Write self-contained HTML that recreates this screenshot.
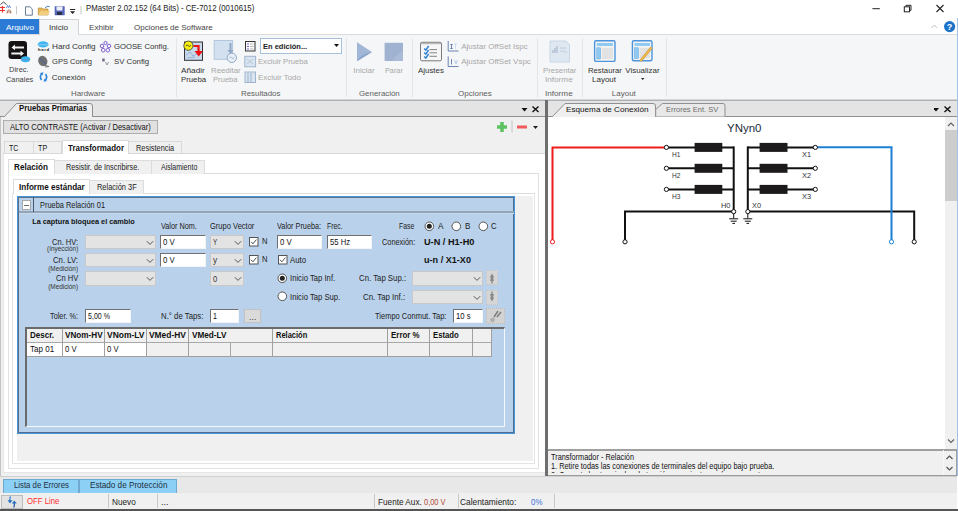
<!DOCTYPE html>
<html><head><meta charset="utf-8"><style>
html,body{margin:0;padding:0;width:958px;height:511px;overflow:hidden;background:#fff;}
body{position:relative;font-family:"Liberation Sans",sans-serif;}
body>div,body>svg{position:absolute;box-sizing:border-box;}
.t{white-space:pre;}

</style></head><body>
<div style="left:0px;top:0px;width:958px;height:19px;background:#ffffff;"></div>
<div style="left:0px;top:19px;width:958px;height:16px;background:#ffffff;"></div>
<div style="left:0px;top:19px;width:39px;height:16px;background:#2b7bd6;"></div>
<div class="t" style="left:5.6px;top:23.86px;font-size:8.00px;line-height:8.00px;font-weight:400;color:#ffffff;transform:scaleX(1.032);transform-origin:0 0;">Arquivo</div>
<div style="left:39px;top:19px;width:40px;height:17px;background:#f5f6f7;border:1px solid #d4d4d4;border-bottom:none;"></div>
<div class="t" style="left:49.1px;top:23.86px;font-size:8.00px;line-height:8.00px;font-weight:400;color:#333;transform:scaleX(1.028);transform-origin:0 0;">Inicio</div>
<div class="t" style="left:89.2px;top:23.66px;font-size:8.00px;line-height:8.00px;font-weight:400;color:#444;transform:scaleX(1.010);transform-origin:0 0;">Exhibir</div>
<div class="t" style="left:134.1px;top:23.66px;font-size:8.00px;line-height:8.00px;font-weight:400;color:#444;">Opciones de Software</div>
<div style="left:0px;top:34px;width:39px;height:1px;background:#dadbdc;"></div>
<div style="left:79px;top:34px;width:879px;height:1px;background:#dadbdc;"></div>
<div style="left:0px;top:35px;width:958px;height:65px;background:#f5f6f7;"></div>
<div style="left:0px;top:99px;width:958px;height:1px;background:#d5d6d7;"></div>
<div style="left:176px;top:38px;width:1px;height:59px;background:#e4e5e6;"></div>
<div style="left:346px;top:38px;width:1px;height:59px;background:#e4e5e6;"></div>
<div style="left:412px;top:38px;width:1px;height:59px;background:#e4e5e6;"></div>
<div style="left:537px;top:38px;width:1px;height:59px;background:#e4e5e6;"></div>
<div style="left:582px;top:38px;width:1px;height:59px;background:#e4e5e6;"></div>
<div style="left:666px;top:38px;width:1px;height:59px;background:#e4e5e6;"></div>
<div class="t" style="left:70.5px;top:90.06px;font-size:8.00px;line-height:8.00px;font-weight:400;color:#5e5e5e;transform:scaleX(0.986);transform-origin:0 0;">Hardware</div>
<div class="t" style="left:240.7px;top:90.06px;font-size:8.00px;line-height:8.00px;font-weight:400;color:#5e5e5e;transform:scaleX(0.984);transform-origin:0 0;">Resultados</div>
<div class="t" style="left:358.5px;top:90.06px;font-size:8.00px;line-height:8.00px;font-weight:400;color:#5e5e5e;transform:scaleX(0.984);transform-origin:0 0;">Generación</div>
<div class="t" style="left:458.0px;top:90.06px;font-size:8.00px;line-height:8.00px;font-weight:400;color:#5e5e5e;">Opciones</div>
<div class="t" style="left:545.4px;top:90.06px;font-size:8.00px;line-height:8.00px;font-weight:400;color:#5e5e5e;transform:scaleX(1.021);transform-origin:0 0;">Informe</div>
<div class="t" style="left:611.8px;top:90.06px;font-size:8.00px;line-height:8.00px;font-weight:400;color:#5e5e5e;">Layout</div>
<div class="t" style="left:86.1px;top:3.66px;font-size:8.70px;line-height:8.70px;font-weight:400;color:#1a1a1a;transform:scaleX(0.898);transform-origin:0 0;">PMaster 2.02.152 (64 Bits) - CE-7012 (0010615)</div>
<svg style="left:0;top:0" width="90" height="19"><path d="M0.5,4.5 L3.5,2 L6.5,4.5" fill="none" stroke="#333" stroke-width="0.9"/><path d="M0,7.5 L5,7.5 M0,10.5 L5,10.5 M2.5,6 L2.5,12.5" stroke="#e83030" stroke-width="1.2"/><path d="M6.5,8 L7.5,5.5 L8.5,7.5 L9.5,5.5 L10.5,8" fill="none" stroke="#5a7ee0" stroke-width="0.9"/><path d="M7.2,13.5 L7.2,11 Q9,8.6 10.8,11 L10.8,13.5 M7.2,12 L10.8,12" fill="none" stroke="#b0705a" stroke-width="1"/><rect x="16" y="6" width="1" height="8.5" fill="#c8c8c8"/><path d="M25.5,6.8 L30,6.8 L32.3,9 L32.3,15.2 L25.5,15.2 Z" fill="#fdfdfd" stroke="#5b6f8c" stroke-width="0.9"/><path d="M38.3,8 L42,8 L43,9 L48,9 L48,15 L38.3,15 Z" fill="#e7b95a" stroke="#b88a3a" stroke-width="0.7"/><path d="M38.5,15 L40.5,11 L50,11 L48,15 Z" fill="#f1cf7f"/><path d="M45,8 Q47,5.5 49.5,6.5" fill="none" stroke="#3b80d0" stroke-width="1"/><rect x="54.7" y="6.3" width="10" height="9" fill="#5265b8" rx="0.5"/><rect x="56.5" y="6.5" width="6" height="4" fill="#f0f0f8"/><rect x="57" y="12" width="5" height="3" fill="#2a3048"/><rect x="70" y="9" width="5.2" height="1" fill="#222"/><path d="M70,11.2 L75.2,11.2 L72.6,14 Z" fill="#222"/><rect x="80.5" y="6" width="1" height="8.5" fill="#c8c8c8"/></svg>
<svg style="left:860px;top:0" width="98" height="36"><rect x="12.4" y="8.2" width="7.4" height="1" fill="#222"/><rect x="44.3" y="6.8" width="5.2" height="5" fill="none" stroke="#222" stroke-width="1"/><path d="M46,6.5 L46,5.3 L51,5.3 L51,10.3 L49.8,10.3" fill="none" stroke="#222" stroke-width="1"/><path d="M76.5,5 L83.5,12 M83.5,5 L76.5,12" stroke="#222" stroke-width="1.1"/><path d="M71.5,28 L74.3,25 L77.1,28" fill="none" stroke="#c4c4c4" stroke-width="1"/><circle cx="89.6" cy="26.6" r="5.6" fill="#1b73c9"/><text x="89.6" y="30" font-family="Liberation Sans" font-weight="700" font-size="9" fill="#fff" text-anchor="middle">?</text></svg>
<svg style="left:0;top:35px" width="680" height="64"><rect x="8.5" y="6" width="18.5" height="18" rx="3.2" fill="#151313"/><path d="M11.5,12.4 L15,9.6 L15,11.4 L24,11.4 L24,13.4 L15,13.4 L15,15.2 Z" fill="#f4f4f4"/><path d="M24,18.5 L20.5,15.7 L20.5,17.5 L11.3,17.5 L11.3,19.5 L20.5,19.5 L20.5,21.3 Z" fill="#f4f4f4"/><ellipse cx="25.5" cy="24.3" rx="4.6" ry="3" fill="#35b3ef"/><rect x="21" y="24.3" width="9" height="1" fill="#6a9bd0"/><ellipse cx="43.1" cy="9.4" rx="5.4" ry="3.1" fill="#3cb7f0"/><rect x="38" y="9.2" width="10.5" height="1" fill="#8fc8ee"/><text x="38" y="16" font-family="Liberation Sans" font-weight="700" font-size="4.2" fill="#111" textLength="11">hard</text><ellipse cx="42.8" cy="26" rx="4.5" ry="5.3" fill="#707070" transform="rotate(-25 42.8 26)"/><path d="M40,24 L46,29" stroke="#3060b0" stroke-width="0.8"/><path d="M44,30 L49,31.5 L45,32" fill="none" stroke="#666" stroke-width="0.9"/><path d="M42,38.5 Q39,41 41.5,45" fill="none" stroke="#2b86d9" stroke-width="1.6"/><path d="M40,38 L43.5,37.3 L42.5,40.5 Z" fill="#2b86d9"/><path d="M45,45.5 Q48,43 45.5,39" fill="none" stroke="#2b86d9" stroke-width="1.6"/><path d="M47,46 L43.5,46.7 L44.5,43.5 Z" fill="#2b86d9"/><g fill="none" stroke="#7e5fcf" stroke-width="1"><circle cx="105.5" cy="8" r="1.6"/><circle cx="102" cy="11" r="1.8"/><circle cx="109" cy="11" r="1.8"/><circle cx="103.2" cy="15.2" r="1.8"/><circle cx="107.8" cy="15.2" r="1.8"/></g><rect x="102.2" y="23.5" width="2.5" height="3" fill="#7a6a8a"/><path d="M105.5,27 L107,30 L108.5,27" fill="none" stroke="#8a8a9a" stroke-width="0.9"/><rect x="184.5" y="7" width="18" height="18.3" fill="#c9d9ec" stroke="#333" stroke-width="1"/><path d="M186,20 L190,17 L193,21 L198,18 M187,23 L195,22" stroke="#9ab3d4" stroke-width="1" fill="none"/><path d="M193.5,11 L198.5,11 L198.5,17" fill="none" stroke="#ee1111" stroke-width="2.2"/><path d="M194.5,16 L203,16 L198.7,21.5 Z" fill="#ee1111"/><circle cx="188.4" cy="10.7" r="4.6" fill="#f5ee10" stroke="#333" stroke-width="0.8"/><path d="M185.9,11 Q187.1,9 188.3,10.7 Q189.5,12.5 190.9,10.3" fill="none" stroke="#222" stroke-width="0.8"/><rect x="214.2" y="5.5" width="18.4" height="18.8" fill="#d3e0ef" stroke="#b1c6dd" stroke-width="1"/><path d="M230.5,8 L230.5,16" stroke="#8ea7c4" stroke-width="2"/><path d="M227.5,15 L233.5,15 L230.5,19 Z" fill="#8ea7c4"/><circle cx="231.8" cy="22.8" r="4.7" fill="#e6eef7" stroke="#93a9c3" stroke-width="1"/><path d="M229.3,23 Q230.5,21 231.7,22.8 Q232.9,24.6 234.3,22.4" fill="none" stroke="#93a9c3" stroke-width="0.8"/><rect x="245.5" y="6.5" width="9.5" height="9.5" fill="#fafafa" stroke="#333" stroke-width="1"/><path d="M247,9 L249,9 M247,11.5 L249,11.5 M247,14 L249,14" stroke="#7a5fe0" stroke-width="1"/><path d="M250,9 L253.5,9 M250,11.5 L253.5,11.5 M250,14 L253.5,14" stroke="#aaa" stroke-width="0.8"/><rect x="244.8" y="21.3" width="10.8" height="10.5" fill="#d9e4f0" stroke="#9fb5cf" stroke-width="1"/><path d="M247,24 L253,29 M247,29 L253,24" stroke="#b5c7dc" stroke-width="1"/><rect x="245" y="37" width="10.5" height="10.5" fill="#d9e4f0" stroke="#9fb5cf" stroke-width="1"/><path d="M248,38 L248,47 M251,38 L251,47" stroke="#9fb5cf" stroke-width="1"/><path d="M357,7.2 L372,17 L357,26.2 Z" fill="#a2b7d6"/><path d="M357,26.2 Q362,18 372,17 L357,26.2" fill="#8ba5cc"/><rect x="384.6" y="7.8" width="18.4" height="18.2" fill="#9fb2d0"/><path d="M392,26 Q398,18 403,16 L403,26 Z" fill="#aabbd5"/><rect x="420.5" y="7.3" width="21" height="18.5" rx="1.5" fill="#f6f6f6" stroke="#7a7a7a" stroke-width="1"/><rect x="421" y="7.8" width="20" height="1.4" fill="#b8b8b8"/><path d="M424.2,13.6 L425.8,15.2 L428.6,11 M424.2,17.6 L425.8,19.2 L428.6,15 M424.2,21.6 L425.8,23.2 L428.6,19" fill="none" stroke="#2a7fd4" stroke-width="1.4"/><path d="M429.5,14.6 L437,14.6 M429.5,17.8 L437,17.8 M429.5,21.3 L437,21.3" stroke="#777" stroke-width="0.9"/><g stroke="#5a78a8" stroke-width="0.9" fill="none"><path d="M448.2,6 L448.2,16 L458.5,16 M451.5,9 L451.5,14 M450.3,9.5 L452.7,9.5 M450.3,13.5 L452.7,13.5"/><path d="M448.2,21.3 L448.2,31.5 L458.5,31.5 M451.5,24 L451.5,29.5"/></g><path d="M454,9 L457,9 M455.5,9 L455.5,14" stroke="#c2d4ea" stroke-width="0.8"/><path d="M454.5,25 L456,29 L457.5,25" fill="none" stroke="#a8c2e4" stroke-width="0.8"/><path d="M550,6 L566,6 L569.5,9.5 L569.5,27 L550,27 Z" fill="#dfe7f1" stroke="#c8d6e6" stroke-width="1"/><path d="M553,18 L553,15 M555,18 L555,13 M557,18 L557,11" stroke="#a9b9cc" stroke-width="1.2"/><path d="M560,13 L566,13 M560,16 L564,16 L567,18" stroke="#b8c8da" stroke-width="0.9" fill="none"/><rect x="594.6" y="5.8" width="20.4" height="20.6" rx="1.5" fill="#f3f3f3" stroke="#4c95dc" stroke-width="1.4"/><rect x="596.8" y="8" width="16" height="3" fill="#8fcaf3"/><rect x="596.8" y="12.8" width="3.8" height="11.2" fill="#8fcaf3" stroke="#5aa0dd" stroke-width="0.5"/><rect x="602" y="12.8" width="11" height="11.2" fill="#e2e2e2"/><rect x="632.4" y="5.8" width="19.6" height="20" rx="1.5" fill="#f3f3f3" stroke="#4c95dc" stroke-width="1.4"/><rect x="634.6" y="8" width="15.4" height="3" fill="#8fcaf3"/><rect x="634.6" y="12.8" width="3.8" height="10.5" fill="#8fcaf3" stroke="#5aa0dd" stroke-width="0.5"/><rect x="639.8" y="12.8" width="10.2" height="10.5" fill="#e2e2e2"/><path d="M640.5,26 L651.5,12.5" stroke="#c98a2c" stroke-width="2.6"/><path d="M640.5,26 L651.5,12.5" stroke="#f2c250" stroke-width="1.4"/><path d="M641,43 L644.4,43 L642.7,45 Z" fill="#222"/></svg>
<div style="left:260px;top:38px;width:82px;height:16px;background:#ffffff;border:1px solid #a7c1dc;"></div>
<div class="t" style="left:262.6px;top:42.66px;font-size:8.00px;line-height:8.00px;font-weight:700;color:#222;transform:scaleX(0.938);transform-origin:0 0;">En edición...</div>
<svg style="left:334px;top:44px" width="6" height="4"><path d="M0,0 L5,0 L2.5,3 Z" fill="#111"/></svg>
<div class="t" style="left:9.2px;top:66.46px;font-size:8.00px;line-height:8.00px;font-weight:400;color:#444;transform:scaleX(0.943);transform-origin:0 0;">Direc.</div>
<div class="t" style="left:5.9px;top:75.56px;font-size:8.00px;line-height:8.00px;font-weight:400;color:#444;transform:scaleX(0.927);transform-origin:0 0;">Canales</div>
<div class="t" style="left:51.7px;top:42.56px;font-size:8.00px;line-height:8.00px;font-weight:400;color:#333;transform:scaleX(1.021);transform-origin:0 0;">Hard Config</div>
<div class="t" style="left:51.7px;top:58.36px;font-size:8.00px;line-height:8.00px;font-weight:400;color:#333;transform:scaleX(0.947);transform-origin:0 0;">GPS Config</div>
<div class="t" style="left:51.7px;top:73.56px;font-size:8.00px;line-height:8.00px;font-weight:400;color:#333;">Conexión</div>
<div class="t" style="left:114.0px;top:42.56px;font-size:8.00px;line-height:8.00px;font-weight:400;color:#333;transform:scaleX(0.963);transform-origin:0 0;">GOOSE Config.</div>
<div class="t" style="left:114.0px;top:58.36px;font-size:8.00px;line-height:8.00px;font-weight:400;color:#333;transform:scaleX(0.977);transform-origin:0 0;">SV Config</div>
<div class="t" style="left:181.3px;top:66.96px;font-size:8.00px;line-height:8.00px;font-weight:400;color:#333;transform:scaleX(1.029);transform-origin:0 0;">Añadir</div>
<div class="t" style="left:180.8px;top:75.96px;font-size:8.00px;line-height:8.00px;font-weight:400;color:#333;transform:scaleX(0.973);transform-origin:0 0;">Prueba</div>
<div class="t" style="left:210.6px;top:66.76px;font-size:8.00px;line-height:8.00px;font-weight:400;color:#a8a8a8;transform:scaleX(0.979);transform-origin:0 0;">Reeditar</div>
<div class="t" style="left:212.6px;top:75.76px;font-size:8.00px;line-height:8.00px;font-weight:400;color:#a8a8a8;transform:scaleX(0.954);transform-origin:0 0;">Prueba</div>
<div class="t" style="left:258.2px;top:58.36px;font-size:8.00px;line-height:8.00px;font-weight:400;color:#a8a8a8;transform:scaleX(0.957);transform-origin:0 0;">Excluir Prueba</div>
<div class="t" style="left:258.2px;top:73.56px;font-size:8.00px;line-height:8.00px;font-weight:400;color:#a8a8a8;transform:scaleX(0.985);transform-origin:0 0;">Excluir Todo</div>
<div class="t" style="left:353.3px;top:66.96px;font-size:8.00px;line-height:8.00px;font-weight:400;color:#a8a8a8;">Iniciar</div>
<div class="t" style="left:384.6px;top:66.96px;font-size:8.00px;line-height:8.00px;font-weight:400;color:#a8a8a8;transform:scaleX(0.910);transform-origin:0 0;">Parar</div>
<div class="t" style="left:417.5px;top:66.96px;font-size:8.00px;line-height:8.00px;font-weight:400;color:#333;transform:scaleX(0.987);transform-origin:0 0;">Ajustes</div>
<div class="t" style="left:461.2px;top:42.66px;font-size:8.00px;line-height:8.00px;font-weight:400;color:#a8a8a8;">Ajustar OffSet Ispc</div>
<div class="t" style="left:461.2px;top:58.36px;font-size:8.00px;line-height:8.00px;font-weight:400;color:#a8a8a8;">Ajustar OffSet Vspc</div>
<div class="t" style="left:542.5px;top:66.66px;font-size:8.00px;line-height:8.00px;font-weight:400;color:#a8a8a8;transform:scaleX(0.963);transform-origin:0 0;">Presentar</div>
<div class="t" style="left:545.4px;top:75.86px;font-size:8.00px;line-height:8.00px;font-weight:400;color:#a8a8a8;transform:scaleX(1.021);transform-origin:0 0;">Informe</div>
<div class="t" style="left:587.6px;top:66.66px;font-size:8.00px;line-height:8.00px;font-weight:400;color:#333;transform:scaleX(0.965);transform-origin:0 0;">Restaurar</div>
<div class="t" style="left:592.0px;top:75.86px;font-size:8.00px;line-height:8.00px;font-weight:400;color:#333;">Layout</div>
<div class="t" style="left:625.2px;top:66.66px;font-size:8.00px;line-height:8.00px;font-weight:400;color:#333;">Visualizar</div>
<div style="left:0px;top:100px;width:958px;height:376px;background:#e8e8e8;"></div>
<div style="left:0px;top:100px;width:545px;height:1px;background:#b0b0b0;"></div>
<div style="left:0px;top:101px;width:545px;height:15px;background:#e4e4e4;"></div>
<div style="left:0px;top:116px;width:545px;height:1px;background:#8f8f8f;"></div>
<div style="left:548px;top:100px;width:409px;height:1px;background:#b0b0b0;"></div>
<div style="left:548px;top:101px;width:409px;height:15px;background:#e4e4e4;"></div>
<div style="left:548px;top:116px;width:409px;height:1px;background:#8f8f8f;"></div>
<div style="left:545px;top:100px;width:3px;height:376px;background:#6e6e6e;"></div>
<div style="left:0px;top:117px;width:545px;height:359px;background:#f0f0f0;"></div>
<div style="left:0px;top:117px;width:1px;height:359px;background:#c4c4c4;"></div>
<div style="left:548px;top:117px;width:397px;height:332px;background:#ffffff;"></div>
<div style="left:945px;top:117px;width:12px;height:332px;background:#f0f0f0;"></div>
<div style="left:945px;top:130px;width:12px;height:71px;background:#cdcdcd;"></div>
<div style="left:548px;top:449px;width:409px;height:27px;background:#f0f0f0;border-top:2px solid #a0a0a0;border-bottom:1px solid #9a9a9a;border-right:1px solid #a0a0a0;"></div>
<svg style="left:0;top:100px" width="100" height="18"><path d="M4.5,16.5 L16.5,3.5 L90,3.5 Q92.5,3.5 92.5,6 L92.5,16.5" fill="#efefef" stroke="#8f8f8f" stroke-width="1"/><rect x="5" y="16" width="87" height="1" fill="#efefef"/></svg>
<div class="t" style="left:18.8px;top:104.45px;font-size:8.90px;line-height:8.90px;font-weight:700;color:#111;transform:scaleX(0.872);transform-origin:0 0;">Pruebas Primarias</div>
<svg style="left:520px;top:104px" width="22" height="10"><path d="M1.5,4 L7.5,4 L4.5,7.5 Z" fill="#111"/><path d="M12.5,2.5 L18.5,8 M18.5,2.5 L12.5,8" stroke="#111" stroke-width="1.4"/></svg>
<svg style="left:934px;top:104px" width="22" height="10"><path d="M-1,4 L5,4 L2,7.5 Z" fill="#111"/><path d="M10.5,2.5 L16.5,8 M16.5,2.5 L10.5,8" stroke="#111" stroke-width="1.4"/></svg>
<svg style="left:494px;top:118px" width="50" height="18"><path d="M8,4 L8,14 M3,9 L13,9" stroke="#5cc360" stroke-width="3.5"/><rect x="17.5" y="2.5" width="1" height="12" fill="#c2c2c2"/><path d="M23,9 L33,9" stroke="#f15b5b" stroke-width="3"/><path d="M39,8 L44,8 L41.5,11 Z" fill="#222"/></svg>
<div style="left:3px;top:120px;width:155px;height:14px;background:#e1e1e1;border:1px solid #adadad;"></div>
<div class="t" style="left:9.7px;top:123.09px;font-size:9.30px;line-height:9.30px;font-weight:400;color:#111;transform:scaleX(0.818);transform-origin:0 0;">ALTO CONTRASTE (Activar / Desactivar)</div>
<div style="left:3px;top:153px;width:542px;height:320px;background:#ffffff;border-left:1px solid #e6e6e6;border-bottom:1px solid #e6e6e6;"></div>
<div style="left:4px;top:141px;width:30px;height:13px;background:#f0f0f0;border:1px solid #d9d9d9;border-bottom:none;"></div>
<div style="left:33px;top:141px;width:29px;height:13px;background:#f0f0f0;border:1px solid #d9d9d9;border-bottom:none;"></div>
<div style="left:128px;top:141px;width:54px;height:13px;background:#f0f0f0;border:1px solid #d9d9d9;border-bottom:none;"></div>
<div style="left:62px;top:140px;width:67px;height:14px;background:#ffffff;border:1px solid #d9d9d9;border-bottom:none;"></div>
<div class="t" style="left:8.6px;top:143.69px;font-size:9.30px;line-height:9.30px;font-weight:400;color:#222;transform:scaleX(0.758);transform-origin:0 0;">TC</div>
<div class="t" style="left:38.1px;top:143.69px;font-size:9.30px;line-height:9.30px;font-weight:400;color:#222;transform:scaleX(0.774);transform-origin:0 0;">TP</div>
<div class="t" style="left:68.4px;top:143.69px;font-size:9.30px;line-height:9.30px;font-weight:700;color:#111;transform:scaleX(0.853);transform-origin:0 0;">Transformador</div>
<div class="t" style="left:135.7px;top:143.69px;font-size:9.30px;line-height:9.30px;font-weight:400;color:#222;transform:scaleX(0.795);transform-origin:0 0;">Resistencia</div>
<div style="left:3px;top:153px;width:59px;height:1px;background:#d9d9d9;"></div>
<div style="left:129px;top:153px;width:416px;height:1px;background:#d9d9d9;"></div>
<div style="left:8px;top:173px;width:531px;height:296px;background:#ffffff;border:1px solid #e2e2e2;border-top-color:#dcdcdc;"></div>
<div style="left:8px;top:159px;width:47px;height:15px;background:#ffffff;border:1px solid #dcdcdc;border-bottom:none;"></div>
<div style="left:54px;top:160px;width:98px;height:14px;background:#f0f0f0;border:1px solid #dcdcdc;border-bottom:none;"></div>
<div style="left:151px;top:160px;width:54px;height:14px;background:#f0f0f0;border:1px solid #dcdcdc;border-bottom:none;"></div>
<div style="left:9px;top:173px;width:45px;height:1px;background:#ffffff;"></div>
<div class="t" style="left:13.8px;top:163.29px;font-size:9.30px;line-height:9.30px;font-weight:700;color:#111;transform:scaleX(0.877);transform-origin:0 0;">Relación</div>
<div class="t" style="left:65.9px;top:163.49px;font-size:9.30px;line-height:9.30px;font-weight:400;color:#222;transform:scaleX(0.783);transform-origin:0 0;">Resistir. de Inscribirse.</div>
<div class="t" style="left:160.5px;top:163.49px;font-size:9.30px;line-height:9.30px;font-weight:400;color:#222;transform:scaleX(0.755);transform-origin:0 0;">Aislamiento</div>
<div style="left:12px;top:193px;width:523px;height:271px;background:#ffffff;border:1px solid #e4e4e4;border-top-color:#dcdcdc;"></div>
<div style="left:17px;top:196px;width:516px;height:265px;background:#f0f0f0;"></div>
<div style="left:13px;top:179px;width:77px;height:15px;background:#ffffff;border:1px solid #dcdcdc;border-bottom:none;"></div>
<div style="left:89px;top:180px;width:55px;height:14px;background:#f0f0f0;border:1px solid #dcdcdc;border-bottom:none;"></div>
<div style="left:14px;top:193px;width:75px;height:1px;background:#ffffff;"></div>
<div class="t" style="left:18.8px;top:183.09px;font-size:9.30px;line-height:9.30px;font-weight:700;color:#111;transform:scaleX(0.872);transform-origin:0 0;">Informe estándar</div>
<div class="t" style="left:96.8px;top:183.09px;font-size:9.30px;line-height:9.30px;font-weight:400;color:#222;transform:scaleX(0.800);transform-origin:0 0;">Relación 3F</div>
<div style="left:17px;top:196px;width:498px;height:238px;background:#b9d1ea;border:1px solid #4795dc;box-shadow:inset 1px 1px 0 #5f7189, inset -1px -1px 0 #4f6e92;"></div>
<div style="left:19px;top:211px;width:495px;height:1.5px;background:#93a4b6;"></div>
<div style="left:19px;top:212.5px;width:495px;height:1px;background:#c9daec;"></div>
<div style="left:22px;top:200px;width:9px;height:10px;background:#ffffff;border:1px solid #a8a8a8;"></div>
<div style="left:24px;top:204.5px;width:5px;height:1.6px;background:#707070;"></div>
<div style="left:33px;top:197px;width:1px;height:15px;background:#4a5566;"></div>
<div class="t" style="left:40.0px;top:201.09px;font-size:9.30px;line-height:9.30px;font-weight:400;color:#1a1a1a;transform:scaleX(0.796);transform-origin:0 0;">Prueba Relación 01</div>
<div class="t" style="left:32.2px;top:218.33px;font-size:7.30px;line-height:7.30px;font-weight:700;color:#111;">La captura bloquea el cambio</div>
<div class="t" style="left:160.7px;top:222.29px;font-size:9.30px;line-height:9.30px;font-weight:400;color:#222;transform:scaleX(0.783);transform-origin:0 0;">Valor Nom.</div>
<div class="t" style="left:209.9px;top:222.29px;font-size:9.30px;line-height:9.30px;font-weight:400;color:#222;transform:scaleX(0.810);transform-origin:0 0;">Grupo Vector</div>
<div class="t" style="left:276.9px;top:222.19px;font-size:9.30px;line-height:9.30px;font-weight:400;color:#222;transform:scaleX(0.785);transform-origin:0 0;">Valor Prueba:</div>
<div class="t" style="left:327.0px;top:222.19px;font-size:9.30px;line-height:9.30px;font-weight:400;color:#222;transform:scaleX(0.741);transform-origin:0 0;">Frec.</div>
<div class="t" style="left:398.8px;top:222.09px;font-size:9.30px;line-height:9.30px;font-weight:400;color:#222;transform:scaleX(0.740);transform-origin:0 0;">Fase</div>
<div class="t" style="left:52.1px;top:238.09px;font-size:9.30px;line-height:9.30px;font-weight:400;color:#222;transform:scaleX(0.813);transform-origin:0 0;">Cn. HV:</div>
<div class="t" style="left:47.0px;top:246.31px;font-size:6.40px;line-height:6.40px;font-weight:400;color:#333;">(Inyección)</div>
<div class="t" style="left:53.4px;top:255.89px;font-size:9.30px;line-height:9.30px;font-weight:400;color:#222;transform:scaleX(0.831);transform-origin:0 0;">Cn. LV:</div>
<div class="t" style="left:48.2px;top:265.61px;font-size:6.40px;line-height:6.40px;font-weight:400;color:#333;">(Medición)</div>
<div class="t" style="left:56.0px;top:273.79px;font-size:9.30px;line-height:9.30px;font-weight:400;color:#222;transform:scaleX(0.814);transform-origin:0 0;">Cn HV</div>
<div class="t" style="left:48.2px;top:283.81px;font-size:6.40px;line-height:6.40px;font-weight:400;color:#333;">(Medición)</div>
<div style="left:85px;top:235px;width:71px;height:14px;background:#e3e3e3;border:1px solid #c8c8c8;"></div>
<svg style="left:146px;top:239.5px" width="8" height="6"><path d="M0.8,1.2 L4,4.4 L7.2,1.2" fill="none" stroke="#555" stroke-width="1"/></svg>
<div style="left:85px;top:253px;width:71px;height:14px;background:#e3e3e3;border:1px solid #c8c8c8;"></div>
<svg style="left:146px;top:257.5px" width="8" height="6"><path d="M0.8,1.2 L4,4.4 L7.2,1.2" fill="none" stroke="#555" stroke-width="1"/></svg>
<div style="left:85px;top:271px;width:71px;height:15px;background:#e3e3e3;border:1px solid #c8c8c8;"></div>
<svg style="left:146px;top:275.5px" width="8" height="6"><path d="M0.8,1.2 L4,4.4 L7.2,1.2" fill="none" stroke="#555" stroke-width="1"/></svg>
<div style="left:160px;top:235px;width:46px;height:14px;background:#ffffff;border:1px solid #f4f4f4;border-top:1px solid #707070;border-left:1px solid #707070;"></div>
<div class="t" style="left:163.0px;top:238.29px;font-size:9.30px;line-height:9.30px;font-weight:400;color:#111;transform:scaleX(0.838);transform-origin:0 0;">0 V</div>
<div style="left:160px;top:253px;width:46px;height:14px;background:#ffffff;border:1px solid #f4f4f4;border-top:1px solid #707070;border-left:1px solid #707070;"></div>
<div class="t" style="left:163.0px;top:256.29px;font-size:9.30px;line-height:9.30px;font-weight:400;color:#111;transform:scaleX(0.838);transform-origin:0 0;">0 V</div>
<div style="left:210px;top:235px;width:34px;height:14px;background:#e3e3e3;border:1px solid #c8c8c8;"></div>
<svg style="left:234px;top:239.5px" width="8" height="6"><path d="M0.8,1.2 L4,4.4 L7.2,1.2" fill="none" stroke="#555" stroke-width="1"/></svg>
<div class="t" style="left:213.0px;top:238.29px;font-size:9.30px;line-height:9.30px;font-weight:400;color:#333;transform:scaleX(0.677);transform-origin:0 0;">Y</div>
<div style="left:210px;top:253px;width:34px;height:14px;background:#e3e3e3;border:1px solid #c8c8c8;"></div>
<svg style="left:234px;top:257.5px" width="8" height="6"><path d="M0.8,1.2 L4,4.4 L7.2,1.2" fill="none" stroke="#555" stroke-width="1"/></svg>
<div class="t" style="left:213.0px;top:256.29px;font-size:9.30px;line-height:9.30px;font-weight:400;color:#333;transform:scaleX(0.903);transform-origin:0 0;">y</div>
<div style="left:210px;top:271px;width:34px;height:15px;background:#e3e3e3;border:1px solid #c8c8c8;"></div>
<svg style="left:234px;top:275.5px" width="8" height="6"><path d="M0.8,1.2 L4,4.4 L7.2,1.2" fill="none" stroke="#555" stroke-width="1"/></svg>
<div class="t" style="left:213.0px;top:274.79px;font-size:9.30px;line-height:9.30px;font-weight:400;color:#333;transform:scaleX(0.812);transform-origin:0 0;">0</div>
<svg style="left:248.8px;top:237px" width="10" height="10"><rect x="0.5" y="0.5" width="8.5" height="8.5" fill="#fff" stroke="#555" stroke-width="1"/><path d="M2,4.8 L3.9,6.8 L7.4,2.6" fill="none" stroke="#505050" stroke-width="1"/></svg>
<div class="t" style="left:262.0px;top:237.39px;font-size:9.30px;line-height:9.30px;font-weight:400;color:#222;transform:scaleX(0.819);transform-origin:0 0;">N</div>
<svg style="left:248.8px;top:255px" width="10" height="10"><rect x="0.5" y="0.5" width="8.5" height="8.5" fill="#fff" stroke="#555" stroke-width="1"/><path d="M2,4.8 L3.9,6.8 L7.4,2.6" fill="none" stroke="#505050" stroke-width="1"/></svg>
<div class="t" style="left:262.0px;top:255.49px;font-size:9.30px;line-height:9.30px;font-weight:400;color:#222;transform:scaleX(0.819);transform-origin:0 0;">N</div>
<div style="left:277px;top:235px;width:45px;height:14px;background:#ffffff;border:1px solid #f4f4f4;border-top:1px solid #707070;border-left:1px solid #707070;"></div>
<div class="t" style="left:280.0px;top:238.29px;font-size:9.30px;line-height:9.30px;font-weight:400;color:#111;transform:scaleX(0.838);transform-origin:0 0;">0 V</div>
<div style="left:327px;top:235px;width:45px;height:14px;background:#ffffff;border:1px solid #f4f4f4;border-top:1px solid #707070;border-left:1px solid #707070;"></div>
<div class="t" style="left:330.0px;top:238.29px;font-size:9.30px;line-height:9.30px;font-weight:400;color:#111;transform:scaleX(0.823);transform-origin:0 0;">55 Hz</div>
<div class="t" style="left:381.6px;top:238.09px;font-size:9.30px;line-height:9.30px;font-weight:400;color:#222;transform:scaleX(0.793);transform-origin:0 0;">Conexión:</div>
<div class="t" style="left:424.3px;top:238.09px;font-size:9.30px;line-height:9.30px;font-weight:700;color:#111;transform:scaleX(0.985);transform-origin:0 0;">U-N / H1-H0</div>
<svg style="left:277.8px;top:255px" width="10" height="10"><rect x="0.5" y="0.5" width="8.5" height="8.5" fill="#fff" stroke="#555" stroke-width="1"/><path d="M2,4.8 L3.9,6.8 L7.4,2.6" fill="none" stroke="#505050" stroke-width="1"/></svg>
<div class="t" style="left:290.0px;top:255.89px;font-size:9.30px;line-height:9.30px;font-weight:400;color:#222;transform:scaleX(0.836);transform-origin:0 0;">Auto</div>
<div class="t" style="left:423.5px;top:256.09px;font-size:9.30px;line-height:9.30px;font-weight:700;color:#111;transform:scaleX(0.978);transform-origin:0 0;">u-n / X1-X0</div>
<svg style="left:424px;top:220.5px" width="11" height="11"><circle cx="5.3" cy="5.3" r="4.3" fill="#fff" stroke="#555" stroke-width="1"/><circle cx="5.3" cy="5.3" r="2.5" fill="#222"/></svg>
<div class="t" style="left:438.0px;top:222.09px;font-size:9.30px;line-height:9.30px;font-weight:400;color:#222;transform:scaleX(0.887);transform-origin:0 0;">A</div>
<svg style="left:451px;top:220.5px" width="11" height="11"><circle cx="5.3" cy="5.3" r="4.3" fill="#fff" stroke="#555" stroke-width="1"/></svg>
<div class="t" style="left:464.6px;top:222.09px;font-size:9.30px;line-height:9.30px;font-weight:400;color:#222;transform:scaleX(0.870);transform-origin:0 0;">B</div>
<svg style="left:477.5px;top:220.5px" width="11" height="11"><circle cx="5.3" cy="5.3" r="4.3" fill="#fff" stroke="#555" stroke-width="1"/></svg>
<div class="t" style="left:490.9px;top:222.09px;font-size:9.30px;line-height:9.30px;font-weight:400;color:#222;transform:scaleX(0.834);transform-origin:0 0;">C</div>
<svg style="left:276.5px;top:272.6px" width="11" height="11"><circle cx="5.3" cy="5.3" r="4.3" fill="#fff" stroke="#555" stroke-width="1"/><circle cx="5.3" cy="5.3" r="2.5" fill="#222"/></svg>
<div class="t" style="left:290.0px;top:274.19px;font-size:9.30px;line-height:9.30px;font-weight:400;color:#222;transform:scaleX(0.827);transform-origin:0 0;">Inicio Tap Inf.</div>
<svg style="left:276.5px;top:291.3px" width="11" height="11"><circle cx="5.3" cy="5.3" r="4.3" fill="#fff" stroke="#555" stroke-width="1"/></svg>
<div class="t" style="left:290.0px;top:292.89px;font-size:9.30px;line-height:9.30px;font-weight:400;color:#222;transform:scaleX(0.825);transform-origin:0 0;">Inicio Tap Sup.</div>
<div class="t" style="left:358.5px;top:274.29px;font-size:9.30px;line-height:9.30px;font-weight:400;color:#222;transform:scaleX(0.838);transform-origin:0 0;">Cn. Tap Sup.:</div>
<div class="t" style="left:363.0px;top:292.89px;font-size:9.30px;line-height:9.30px;font-weight:400;color:#222;transform:scaleX(0.844);transform-origin:0 0;">Cn. Tap Inf.:</div>
<div style="left:412px;top:271px;width:71px;height:15px;background:#e3e3e3;border:1px solid #c8c8c8;"></div>
<svg style="left:473px;top:275.5px" width="8" height="6"><path d="M0.8,1.2 L4,4.4 L7.2,1.2" fill="none" stroke="#555" stroke-width="1"/></svg>
<div style="left:412px;top:290px;width:71px;height:14px;background:#e3e3e3;border:1px solid #c8c8c8;"></div>
<svg style="left:473px;top:294.5px" width="8" height="6"><path d="M0.8,1.2 L4,4.4 L7.2,1.2" fill="none" stroke="#555" stroke-width="1"/></svg>
<div style="left:486px;top:270px;width:12px;height:15px;background:#d6d6d6;border:1px dotted #c4c4c4;"></div>
<div style="left:486px;top:290px;width:12px;height:15px;background:#d6d6d6;border:1px dotted #c4c4c4;"></div>
<svg style="left:486px;top:271px" width="12" height="34"><path d="M6,2.5 L8.3,6.5 L7,6.5 L8,10 L6.7,10 L6.7,12.5 L5.3,12.5 L5.3,10 L4,10 L5,6.5 L3.7,6.5 Z" fill="#8a8a8a"/><path d="M6,30.5 L8.3,26.5 L7,26.5 L8,23 L6.7,23 L6.7,20.5 L5.3,20.5 L5.3,23 L4,23 L5,26.5 L3.7,26.5 Z" fill="#8a8a8a"/></svg>
<div class="t" style="left:50.3px;top:312.09px;font-size:9.30px;line-height:9.30px;font-weight:400;color:#222;transform:scaleX(0.785);transform-origin:0 0;">Toler. %:</div>
<div style="left:85px;top:309px;width:46px;height:14px;background:#ffffff;border:1px solid #f4f4f4;border-top:1px solid #707070;border-left:1px solid #707070;"></div>
<div class="t" style="left:88.0px;top:312.29px;font-size:9.30px;line-height:9.30px;font-weight:400;color:#111;transform:scaleX(0.760);transform-origin:0 0;">5,00 %</div>
<div class="t" style="left:160.8px;top:312.09px;font-size:9.30px;line-height:9.30px;font-weight:400;color:#222;transform:scaleX(0.838);transform-origin:0 0;">N.° de Taps:</div>
<div style="left:210px;top:309px;width:29px;height:14px;background:#ffffff;border:1px solid #f4f4f4;border-top:1px solid #707070;border-left:1px solid #707070;"></div>
<div class="t" style="left:213.0px;top:312.29px;font-size:9.30px;line-height:9.30px;font-weight:400;color:#111;transform:scaleX(0.773);transform-origin:0 0;">1</div>
<div style="left:244px;top:309px;width:17px;height:14px;background:#dadada;border:1px solid #c2c2c2;"></div>
<div class="t" style="left:248.5px;top:313.09px;font-size:9.30px;line-height:9.30px;font-weight:400;color:#444;transform:scaleX(0.967);transform-origin:0 0;">...</div>
<div class="t" style="left:375.3px;top:311.89px;font-size:9.30px;line-height:9.30px;font-weight:400;color:#222;transform:scaleX(0.808);transform-origin:0 0;">Tiempo Conmut. Tap:</div>
<div style="left:453px;top:309px;width:30px;height:14px;background:#ffffff;border:1px solid #f4f4f4;border-top:1px solid #707070;border-left:1px solid #707070;"></div>
<div class="t" style="left:456.0px;top:312.29px;font-size:9.30px;line-height:9.30px;font-weight:400;color:#111;transform:scaleX(0.825);transform-origin:0 0;">10 s</div>
<div style="left:486px;top:308px;width:19px;height:16px;background:#d3d3d3;border:1px dotted #bdbdbd;"></div>
<svg style="left:486px;top:307px" width="18" height="17"><path d="M4,12 Q7,9 9,12 L8,15 L5,15 Z" fill="#b0b0b0"/><path d="M8,10 L12,4 M11,10 L15,5" stroke="#7a7a7a" stroke-width="1.4"/></svg>
<div style="left:25px;top:327px;width:480px;height:100px;background:#b9d1ea;border-top:2px solid #6a6a6a;border-left:2px solid #6a6a6a;border-bottom:1px solid #f4f7fb;border-right:1px solid #f4f7fb;"></div>
<div style="left:27px;top:329px;width:465px;height:13px;background:#f0f0f0;"></div>
<div style="left:27px;top:343px;width:119px;height:13px;background:#ffffff;"></div>
<div style="left:146px;top:343px;width:346px;height:13px;background:#f0f0f0;"></div>
<div style="left:27px;top:342px;width:465px;height:1px;background:#a8a8a8;"></div>
<div style="left:27px;top:356px;width:465px;height:1px;background:#a0a0a0;"></div>
<div style="left:62px;top:329px;width:1px;height:27px;background:#a0a0a0;"></div>
<div style="left:104px;top:329px;width:1px;height:27px;background:#a0a0a0;"></div>
<div style="left:146px;top:329px;width:1px;height:27px;background:#a0a0a0;"></div>
<div style="left:188px;top:329px;width:1px;height:27px;background:#a0a0a0;"></div>
<div style="left:272px;top:329px;width:1px;height:27px;background:#a0a0a0;"></div>
<div style="left:387px;top:329px;width:1px;height:27px;background:#a0a0a0;"></div>
<div style="left:429px;top:329px;width:1px;height:27px;background:#a0a0a0;"></div>
<div style="left:472px;top:329px;width:1px;height:27px;background:#a0a0a0;"></div>
<div style="left:230px;top:343px;width:1px;height:13px;background:#a8a8a8;"></div>
<div style="left:491px;top:329px;width:1px;height:28px;background:#a0a0a0;"></div>
<div class="t" style="left:30.4px;top:331.19px;font-size:9.30px;line-height:9.30px;font-weight:700;color:#111;transform:scaleX(0.863);transform-origin:0 0;">Descr.</div>
<div class="t" style="left:64.9px;top:331.19px;font-size:9.30px;line-height:9.30px;font-weight:700;color:#111;transform:scaleX(0.877);transform-origin:0 0;">VNom-HV</div>
<div class="t" style="left:107.0px;top:331.19px;font-size:9.30px;line-height:9.30px;font-weight:700;color:#111;transform:scaleX(0.911);transform-origin:0 0;">VNom-LV</div>
<div class="t" style="left:149.1px;top:331.19px;font-size:9.30px;line-height:9.30px;font-weight:700;color:#111;transform:scaleX(0.904);transform-origin:0 0;">VMed-HV</div>
<div class="t" style="left:191.5px;top:331.19px;font-size:9.30px;line-height:9.30px;font-weight:700;color:#111;transform:scaleX(0.882);transform-origin:0 0;">VMed-LV</div>
<div class="t" style="left:275.7px;top:331.19px;font-size:9.30px;line-height:9.30px;font-weight:700;color:#111;transform:scaleX(0.807);transform-origin:0 0;">Relación</div>
<div class="t" style="left:390.8px;top:331.19px;font-size:9.30px;line-height:9.30px;font-weight:700;color:#111;transform:scaleX(0.854);transform-origin:0 0;">Error %</div>
<div class="t" style="left:433.2px;top:331.19px;font-size:9.30px;line-height:9.30px;font-weight:700;color:#111;transform:scaleX(0.832);transform-origin:0 0;">Estado</div>
<div class="t" style="left:30.4px;top:345.19px;font-size:9.30px;line-height:9.30px;font-weight:400;color:#111;transform:scaleX(0.863);transform-origin:0 0;">Tap 01</div>
<div class="t" style="left:64.9px;top:345.19px;font-size:9.30px;line-height:9.30px;font-weight:400;color:#111;transform:scaleX(0.831);transform-origin:0 0;">0 V</div>
<div class="t" style="left:107.0px;top:345.19px;font-size:9.30px;line-height:9.30px;font-weight:400;color:#111;transform:scaleX(0.824);transform-origin:0 0;">0 V</div>
<svg style="left:548px;top:100px" width="190" height="18"><path d="M4.5,16.5 L17,3.5 L105,3.5 Q107.5,3.5 107.5,6 L107.5,16.5" fill="#efefef" stroke="#8f8f8f" stroke-width="1"/><rect x="5" y="16" width="102" height="1" fill="#efefef"/><path d="M107.7,16.5 L107.7,9.5 L114.4,3.5 L175,3.5 Q177,3.5 177,5.5 L177,16.5" fill="#e8e8e8" stroke="#8f8f8f" stroke-width="1"/></svg>
<div class="t" style="left:566.3px;top:105.96px;font-size:8.00px;line-height:8.00px;font-weight:400;color:#111;transform:scaleX(1.019);transform-origin:0 0;">Esquema de Conexión</div>
<div class="t" style="left:665.6px;top:105.86px;font-size:8.00px;line-height:8.00px;font-weight:400;color:#6e6e6e;transform:scaleX(0.939);transform-origin:0 0;">Errores Ent. SV</div>
<svg style="left:945px;top:117px" width="12" height="331"><path d="M3,9 L6,6 L9,9" fill="none" stroke="#606060" stroke-width="1.1"/><path d="M3,322.5 L6,325.5 L9,322.5" fill="none" stroke="#606060" stroke-width="1.1"/></svg>
<div style="left:549px;top:451px;width:394px;height:22.3px;overflow:hidden;"><div style="position:absolute;left:1.7px;top:1.9px;font-size:8.3px;line-height:9.1px;color:#111;white-space:pre;transform:scaleX(0.885);transform-origin:0 0;">Transformador - Relación
1. Retire todas las conexiones de terminales del equipo bajo prueba.
2. Conecte los terminales de tensión y corriente según se muestra.</div></div>
<div style="left:943px;top:450px;width:1px;height:25px;background:#f8f8f8;"></div>
<svg style="left:944px;top:450px" width="13" height="25"><path d="M2.5,9 L5.5,6 L8.5,9" fill="none" stroke="#505050" stroke-width="1.1"/><path d="M2.5,17 L5.5,20 L8.5,17" fill="none" stroke="#505050" stroke-width="1.1"/></svg>
<svg style="left:0;top:0" width="958" height="511"><g stroke="#111" stroke-width="2" fill="none"><path d="M666.4,147.4 L733.7,147.4"/><path d="M747.8,147.4 L815.3,147.4"/><path d="M666.4,168.3 L733.7,168.3"/><path d="M747.8,168.3 L815.3,168.3"/><path d="M666.4,189.4 L733.7,189.4"/><path d="M747.8,189.4 L815.3,189.4"/><path d="M733.7,146.4 L733.7,211.6"/><path d="M747.8,146.4 L747.8,211.6"/><path d="M625,241.8 L625,211.6 L733.7,211.6"/><path d="M747.8,211.6 L914.2,211.6 L914.2,241.8"/></g><g stroke="#111" stroke-width="1" fill="none"><path d="M733.7,213 L733.7,218.5 M729.2,218.8 L738.2,218.8 M730.7,221.2 L736.7,221.2 M732.4000000000001,223.4 L735.0,223.4"/><path d="M747.8,213 L747.8,218.5 M743.3,218.8 L752.3,218.8 M744.8,221.2 L750.8,221.2 M746.5,223.4 L749.0999999999999,223.4"/></g><rect x="694.6" y="142.9" width="27.7" height="9" fill="#1c1a1a"/><rect x="759.6" y="142.9" width="27.9" height="9" fill="#1c1a1a"/><rect x="694.6" y="163.8" width="27.7" height="9" fill="#1c1a1a"/><rect x="759.6" y="163.8" width="27.9" height="9" fill="#1c1a1a"/><rect x="694.6" y="184.9" width="27.7" height="9" fill="#1c1a1a"/><rect x="759.6" y="184.9" width="27.9" height="9" fill="#1c1a1a"/><path d="M666.4,147.5 L552.5,147.5 L552.5,241.8" stroke="#ee1c1c" stroke-width="2" fill="none"/><path d="M815.3,147.3 L891.5,147.3 L891.5,241.8" stroke="#1c7fd6" stroke-width="2" fill="none"/><circle cx="666.4" cy="147.4" r="2.1" fill="#fff" stroke="#111" stroke-width="1"/><circle cx="666.4" cy="168.3" r="2.1" fill="#fff" stroke="#111" stroke-width="1"/><circle cx="666.4" cy="189.4" r="2.1" fill="#fff" stroke="#111" stroke-width="1"/><circle cx="815.3" cy="147.4" r="2.1" fill="#fff" stroke="#111" stroke-width="1"/><circle cx="815.3" cy="168.3" r="2.1" fill="#fff" stroke="#111" stroke-width="1"/><circle cx="815.3" cy="189.4" r="2.1" fill="#fff" stroke="#111" stroke-width="1"/><circle cx="733.7" cy="211.6" r="2.1" fill="#fff" stroke="#111" stroke-width="1"/><circle cx="747.8" cy="211.6" r="2.1" fill="#fff" stroke="#111" stroke-width="1"/><circle cx="625" cy="241.8" r="2.1" fill="#fff" stroke="#111" stroke-width="1"/><circle cx="914.2" cy="241.8" r="2.1" fill="#fff" stroke="#111" stroke-width="1"/><circle cx="552.5" cy="241.8" r="2.1" fill="#fff" stroke="#ee1c1c" stroke-width="1"/><circle cx="891.5" cy="241.8" r="2.1" fill="#fff" stroke="#1c7fd6" stroke-width="1"/></svg>
<div class="t" style="left:726.7px;top:122.98px;font-size:11.20px;line-height:11.20px;font-weight:400;color:#1b2b3b;transform:scaleX(1.026);transform-origin:0 0;">YNyn0</div>
<div class="t" style="left:672.0px;top:151.09px;font-size:7.00px;line-height:7.00px;font-weight:400;color:#333;transform:scaleX(0.950);transform-origin:0 0;">H1</div>
<div class="t" style="left:672.0px;top:171.99px;font-size:7.00px;line-height:7.00px;font-weight:400;color:#333;transform:scaleX(0.950);transform-origin:0 0;">H2</div>
<div class="t" style="left:672.0px;top:192.99px;font-size:7.00px;line-height:7.00px;font-weight:400;color:#333;transform:scaleX(0.950);transform-origin:0 0;">H3</div>
<div class="t" style="left:721.0px;top:201.79px;font-size:7.00px;line-height:7.00px;font-weight:400;color:#333;transform:scaleX(1.062);transform-origin:0 0;">H0</div>
<div class="t" style="left:751.7px;top:201.79px;font-size:7.00px;line-height:7.00px;font-weight:400;color:#333;transform:scaleX(1.051);transform-origin:0 0;">X0</div>
<div class="t" style="left:801.6px;top:151.19px;font-size:7.00px;line-height:7.00px;font-weight:400;color:#333;transform:scaleX(1.063);transform-origin:0 0;">X1</div>
<div class="t" style="left:801.6px;top:171.99px;font-size:7.00px;line-height:7.00px;font-weight:400;color:#333;transform:scaleX(1.063);transform-origin:0 0;">X2</div>
<div class="t" style="left:801.6px;top:192.99px;font-size:7.00px;line-height:7.00px;font-weight:400;color:#333;transform:scaleX(1.063);transform-origin:0 0;">X3</div>
<div style="left:0px;top:476px;width:957px;height:17px;background:#e8e8e8;border-top:1px solid #d0d0d0;"></div>
<div style="left:3px;top:479px;width:76px;height:14px;background:#8dd0f5;border:1px solid #6fa9cf;border-bottom:none;"></div>
<div style="left:79px;top:479px;width:98px;height:14px;background:#8dd0f5;border:1px solid #6fa9cf;border-bottom:none;"></div>
<div class="t" style="left:14.2px;top:481.23px;font-size:9.00px;line-height:9.00px;font-weight:400;color:#1e2f3c;transform:scaleX(0.864);transform-origin:0 0;">Lista de Errores</div>
<div class="t" style="left:89.7px;top:481.23px;font-size:9.00px;line-height:9.00px;font-weight:400;color:#1e2f3c;transform:scaleX(0.905);transform-origin:0 0;">Estado de Protección</div>
<div style="left:0px;top:493px;width:957px;height:18px;background:#f0f0f0;"></div>
<div style="left:0px;top:509px;width:958px;height:2px;background:#555555;"></div>
<div style="left:1px;top:495px;width:22px;height:14px;background:#e3e3e3;border:1px solid #bdbdbd;"></div>
<svg style="left:1px;top:495px" width="22" height="14"><path d="M9.5,1.5 Q8.5,3 9,6" fill="none" stroke="#2f7fd0" stroke-width="1.3"/><path d="M6.5,5.2 L11.5,5.2 L9,8.5 Z" fill="#2a72c0"/><path d="M12.8,12.5 Q13.8,10 13.2,7.5" fill="none" stroke="#2a5fa8" stroke-width="1.3"/><path d="M10.8,8.5 L15.8,8.5 L13.3,5.5 Z" fill="#2a72c0"/></svg>
<div class="t" style="left:26.7px;top:497.40px;font-size:9.30px;line-height:9.30px;font-weight:400;color:#ff2e2e;transform:scaleX(0.836);transform-origin:0 0;">OFF Line</div>
<div style="left:108px;top:494px;width:1px;height:14px;background:#c8c8c8;"></div>
<div style="left:157px;top:494px;width:1px;height:14px;background:#c8c8c8;"></div>
<div style="left:374px;top:494px;width:1px;height:14px;background:#c8c8c8;"></div>
<div style="left:458px;top:494px;width:1px;height:14px;background:#c8c8c8;"></div>
<div style="left:554px;top:494px;width:1px;height:14px;background:#c8c8c8;"></div>
<div class="t" style="left:111.7px;top:497.57px;font-size:8.90px;line-height:8.90px;font-weight:400;color:#222;transform:scaleX(0.925);transform-origin:0 0;">Nuevo</div>
<div class="t" style="left:160.5px;top:497.57px;font-size:8.90px;line-height:8.90px;font-weight:400;color:#222;transform:scaleX(1.011);transform-origin:0 0;">...</div>
<div class="t" style="left:377.8px;top:497.57px;font-size:8.90px;line-height:8.90px;font-weight:400;color:#222;transform:scaleX(0.924);transform-origin:0 0;">Fuente Aux.</div>
<div class="t" style="left:423.8px;top:497.57px;font-size:8.90px;line-height:8.90px;font-weight:400;color:#b04a3a;transform:scaleX(0.839);transform-origin:0 0;">0,00 V</div>
<div class="t" style="left:459.8px;top:497.57px;font-size:8.90px;line-height:8.90px;font-weight:400;color:#222;transform:scaleX(0.942);transform-origin:0 0;">Calentamiento:</div>
<div class="t" style="left:531.2px;top:497.57px;font-size:8.90px;line-height:8.90px;font-weight:400;color:#3b6fd8;transform:scaleX(0.894);transform-origin:0 0;">0%</div>
<div style="left:957px;top:18px;width:1px;height:458px;background:#9ec3e6;"></div>
</body></html>
